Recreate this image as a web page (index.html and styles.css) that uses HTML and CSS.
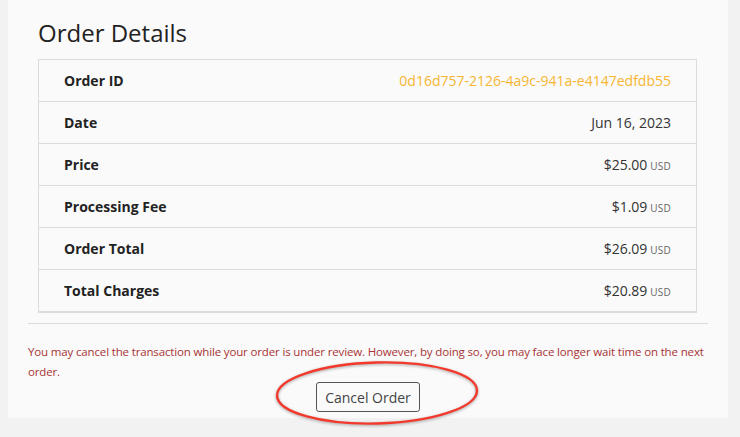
FILE: index.html
```html
<!DOCTYPE html>
<html>
<head>
<meta charset="utf-8">
<link rel="stylesheet" href="styles.css">
</head>
<body>
<div class="page">
  <div class="panel">
    <div class="inner">
      <h2 class="title">Order Details</h2>
      <div class="table">
        <div class="row"><span class="label">Order ID</span><span class="value id">0d16d757-2126-4a9c-941a-e4147edfdb55</span></div>
        <div class="row"><span class="label">Date</span><span class="value">Jun 16, 2023</span></div>
        <div class="row"><span class="label">Price</span><span class="value">$25.00<small class="cur">USD</small></span></div>
        <div class="row"><span class="label">Processing Fee</span><span class="value">$1.09<small class="cur">USD</small></span></div>
        <div class="row"><span class="label">Order Total</span><span class="value">$26.09<small class="cur">USD</small></span></div>
        <div class="row"><span class="label">Total Charges</span><span class="value">$20.89<small class="cur">USD</small></span></div>
      </div>
    </div>
    <hr class="rule">
    <p class="warn">You may cancel the transaction while your order is under review. However, by doing so, you may face longer wait time on the next<br>order.</p>
    <div class="actions">
      <button class="btn">Cancel Order</button>
    </div>
    <svg class="ring" width="220" height="80" viewBox="0 0 220 80">
      <ellipse cx="110" cy="40" rx="100" ry="30.5" transform="rotate(-1.5 110 40)" fill="none" stroke="#f2392c" stroke-width="2.4"/>
    </svg>
  </div>
</div>
</body>
</html>
```
FILE: styles.css
```css
* { box-sizing: border-box; }
html, body { margin: 0; padding: 0; }
body {
  background: #f2f2f2;
  font-family: "Open Sans", "Liberation Sans", sans-serif;
  color: #333;
  width: 740px;
  height: 437px;
  overflow: hidden;
}
.page {
  padding: 0 12px 19px 8px;
}
.panel {
  position: relative;
  background: #fafafa;
  padding: 19px 20px 6px 20px;
}
.inner {
  padding: 0 11px 0 10px;
}
.title {
  margin: 0 0 12px 0;
  font-size: 24px;
  line-height: 28px;
  font-weight: 400;
  color: #222;
}
.table {
  border: 1px solid #dcdcdc;
  box-shadow: 0 1px 0 #dcdcdc;
}
.row {
  display: flex;
  justify-content: space-between;
  align-items: center;
  height: 42px;
  padding: 0 25px 0 25px;
  border-bottom: 1px solid #dcdcdc;
  font-size: 14px;
}
.row:last-child {
  height: 41px;
  border-bottom: none;
}
.label {
  font-weight: 700;
  color: #222;
}
.value {
  color: #333;
}
.id {
  color: #f6b631;
}
.cur {
  font-size: 10px;
  color: #666;
  margin-left: 3px;
  letter-spacing: 0.2px;
}
.rule {
  border: none;
  border-top: 1px solid #dcdcdc;
  margin: 11px 0 0 0;
  height: 0;
}
.warn {
  margin: 18px 0 0 0;
  font-size: 11.5px;
  letter-spacing: -0.15px;
  line-height: 20px;
  color: #a93434;
}
.actions {
  display: flex;
  justify-content: center;
}
.btn {
  width: 104px;
  height: 30px;
  border: 1px solid #555;
  border-radius: 3px;
  background: #fafafa;
  font-family: "Open Sans", "Liberation Sans", sans-serif;
  font-size: 14px;
  color: #444;
  padding: 0;
}
.ring {
  position: absolute;
  left: 259px;
  top: 353px;
  filter: drop-shadow(0 1px 1.5px rgba(0,0,0,0.35));
}
```
